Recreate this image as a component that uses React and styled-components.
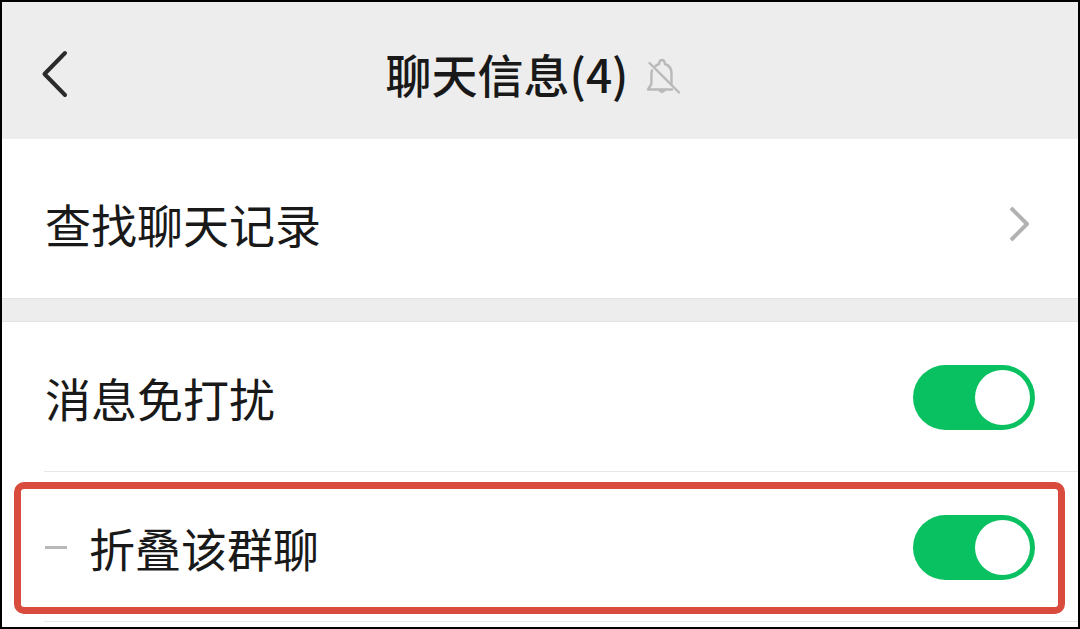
import React, { useState } from 'react';
import styled, { createGlobalStyle } from 'styled-components';

const GlobalStyle = createGlobalStyle`
  *,
  *::before,
  *::after {
    box-sizing: border-box;
  }

  body {
    margin: 0;
    background: #fff;
    color: #191919;
    font-family: 'Noto Sans CJK SC', sans-serif;
  }
`;

const Screen = styled.main`
  min-height: 100vh;
  border: 2px solid #000;
  background: #fff;
`;

const Header = styled.header`
  display: grid;
  grid-template-columns: 1fr auto 1fr;
  align-items: center;
  height: 137px;
  padding: 4px 48px 0 36px;
  background: #ededed;
`;

const BackButton = styled.button`
  display: flex;
  justify-self: start;
  margin: 0;
  padding: 0;
  border: 0;
  background: none;
  color: #2b2b2b;
  cursor: pointer;
`;

const TitleGroup = styled.div`
  display: flex;
  align-items: center;
  gap: 16px;

  svg {
    margin-top: 4px;
  }
`;

const Title = styled.h1`
  margin: 0;
  font-size: 46px;
  font-weight: 500;
  line-height: 64px;
`;

const Divider = styled.div`
  height: 24px;
  border: solid #e2e2e2;
  border-width: 1px 0;
  background: #ededed;
`;

const rowStyles = `
  display: flex;
  align-items: center;
  justify-content: space-between;
  padding: 0 43px;
  font-size: 46px;
  line-height: 64px;
`;

const LinkRow = styled.a`
  ${rowStyles}
  height: 159px;
  padding-top: 8px;
  color: inherit;
  text-decoration: none;
`;

const SwitchRow = styled.label`
  ${rowStyles}
  position: relative;
  height: 150px;
  cursor: pointer;

  &::after {
    content: '';
    position: absolute;
    left: 42px;
    right: 0;
    bottom: 0;
    border-bottom: 1px solid #e8e8e8;
  }
`;

const Label = styled.span`
  display: flex;
  align-items: center;
  gap: 22px;
`;

const Dash = styled.span`
  width: 22px;
  height: 3px;
  background: #b8b8b8;
`;

const Switch = styled.input`
  appearance: none;
  display: flex;
  align-items: center;
  width: 122px;
  height: 65px;
  margin: 0;
  padding: 0 5px;
  border-radius: 33px;
  background: #d8d8d8;
  cursor: pointer;

  &::before {
    content: '';
    width: 55px;
    height: 55px;
    border-radius: 50%;
    background: #fff;
  }

  &:checked {
    justify-content: flex-end;
    background: #09c160;
  }
`;

const Highlight = styled.span`
  position: absolute;
  top: 10px;
  right: 13px;
  bottom: 8px;
  left: 12px;
  border: 7px solid #d94c3d;
  border-radius: 10px;
  pointer-events: none;
`;

function BackIcon() {
  return (
    <svg width="32" height="50" viewBox="0 0 32 50" fill="none" aria-hidden="true">
      <path
        d="M27 5 6.500 26 27 47"
        stroke="currentColor"
        strokeWidth="4"
        strokeLinecap="round"
        strokeLinejoin="round"
      />
    </svg>
  );
}

function MutedIcon() {
  return (
    <svg
      width="38"
      height="38"
      viewBox="0 0 38 38"
      fill="none"
      stroke="#b9b9b9"
      strokeWidth="2.4"
      strokeLinecap="round"
      strokeLinejoin="round"
      aria-hidden="true"
    >
      <path d="M8 14.500c-.5 1.500-.6 3-.6 4.500v9L4 33.500h24" />
      <path d="M11.500 10c1.200-1 2.400-1.600 3.600-2 .2-2.500 1.200-4 2.900-4s2.700 1.500 2.900 4c4.200 1.400 6.600 5 6.600 9.500V28" />
      <path d="M15.500 34.500 18 36l2.500-1.500" />
      <path d="M5.500 7 35 36.500" />
    </svg>
  );
}

function ChevronIcon() {
  return (
    <svg width="28" height="40" viewBox="0 0 28 40" fill="none" aria-hidden="true">
      <path d="M4 5 20 21 4 37" stroke="#b2b2b2" strokeWidth="4" strokeLinejoin="round" />
    </svg>
  );
}

function SwitchItem({ label, nested, highlighted }) {
  const [on, setOn] = useState(true);

  return (
    <SwitchRow>
      <Label>
        {nested && <Dash />}
        {label}
      </Label>
      <Switch type="checkbox" role="switch" checked={on} onChange={() => setOn(!on)} />
      {highlighted && <Highlight />}
    </SwitchRow>
  );
}

function App() {
  return (
    <>
      <GlobalStyle />
      <Screen>
        <Header>
          <BackButton type="button" aria-label="返回">
            <BackIcon />
          </BackButton>
          <TitleGroup>
            <Title>聊天信息(4)</Title>
            <MutedIcon />
          </TitleGroup>
        </Header>
        <LinkRow href="#search">
          查找聊天记录
          <ChevronIcon />
        </LinkRow>
        <Divider />
        <SwitchItem label="消息免打扰" />
        <SwitchItem label="折叠该群聊" nested highlighted />
      </Screen>
    </>
  );
}

export default App;
